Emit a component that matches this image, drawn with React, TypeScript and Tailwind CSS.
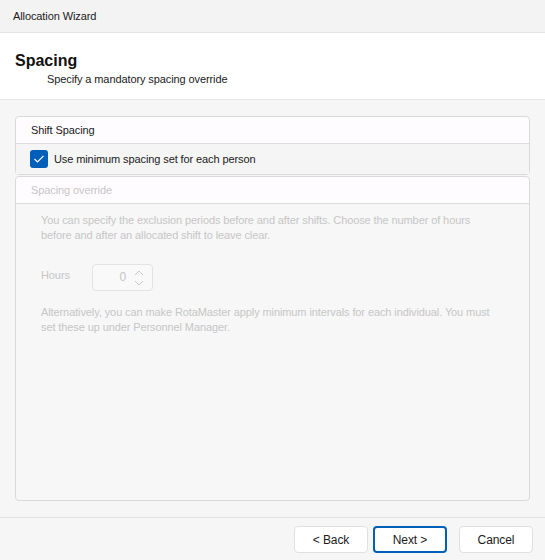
import React from "react";

const font = { fontFamily: '"Liberation Sans", Arial, sans-serif' };

function Spinner() {
  return (
    <div className="flex h-[27px] w-[61px] items-center justify-end rounded-[4px] border border-[#e3e3e3] bg-[#f9f9f9] pr-[8px]">
      <span className="mr-[8px] text-[12px] text-[#c4c4c4]">0</span>
      <svg width="10" height="18" viewBox="0 0 10 18" fill="none" stroke="#c8c8c8" strokeWidth="1">
        <path d="M1 6 L5 2 L9 6" />
        <path d="M1 12 L5 16 L9 12" />
      </svg>
    </div>
  );
}

export default function App() {
  return (
    <div className="flex h-[560px] w-[545px] flex-col bg-[#f6f6f6] text-[11px] tracking-[-0.1px] text-[#1a1a1a]" style={font}>
      <div className="flex h-[33px] items-center border-b border-[#e2e2e2] bg-[#f3f3f3] pl-[13px]">
        Allocation Wizard
      </div>

      <div className="h-[67px] border-b border-[#e6e6e6] bg-white pl-[15px] pt-[17px]">
        <h1 className="text-[16px] font-bold leading-[22px] tracking-normal text-[#111]">Spacing</h1>
        <p className="pl-[32px] leading-[15px]">Specify a mandatory spacing override</p>
      </div>

      <div className="flex flex-1 flex-col px-[15px] pt-[16px]">
        <div className="rounded-[4px] border border-[#d9d9d9]">
          <div className="flex h-[27px] items-center rounded-t-[4px] border-b border-[#dcdcdc] bg-[#fffcff] pl-[15px]">
            Shift Spacing
          </div>
          <div className="flex h-[30px] items-center gap-[6px] bg-[#f5f5f5] pl-[14px]">
            <div className="flex h-[18px] w-[18px] items-center justify-center rounded-[3px] bg-[#005fb8]">
              <svg width="12" height="10" viewBox="0 0 12 10" fill="none" stroke="white" strokeWidth="1.2">
                <path d="M1.5 5 L4.5 8 L10.5 1.8" />
              </svg>
            </div>
            <span>Use minimum spacing set for each person</span>
          </div>
        </div>

        <div className="mt-px flex h-[325px] flex-col rounded-[4px] border border-[#d9d9d9] bg-[#f7f7f7]">
          <div className="flex h-[27px] shrink-0 items-center rounded-t-[4px] border-b border-[#dcdcdc] bg-[#fffcff] pl-[15px] text-[#c6c6c6]">
            Spacing override
          </div>
          <div className="px-[25px] pt-[9px] leading-[15px] text-[#c6c6c6]">
            <p className="max-w-[455px]">
              You can specify the exclusion periods before and after shifts. Choose the number of hours before and after an
              allocated shift to leave clear.
            </p>
            <div className="mt-[21px] flex items-center">
              <span className="w-[51px] pb-[5px]">Hours</span>
              <Spinner />
            </div>
            <p className="mt-[14px] max-w-[455px]">
              Alternatively, you can make RotaMaster apply minimum intervals for each individual. You must set these up
              under Personnel Manager.
            </p>
          </div>
        </div>
      </div>

      <div className="flex h-[43px] items-start justify-end border-t border-[#e4e4e4] pr-[12px] pt-[8px] text-[12px]">
        <button className="h-[27px] w-[74px] rounded-[4px] border border-[#e0e0e0] bg-white">&lt; Back</button>
        <button className="ml-[5px] h-[27px] w-[74px] rounded-[4px] border-2 border-[#005fb8] bg-white">Next &gt;</button>
        <button className="ml-[12px] h-[27px] w-[74px] rounded-[4px] border border-[#e0e0e0] bg-white">Cancel</button>
      </div>
    </div>
  );
}
